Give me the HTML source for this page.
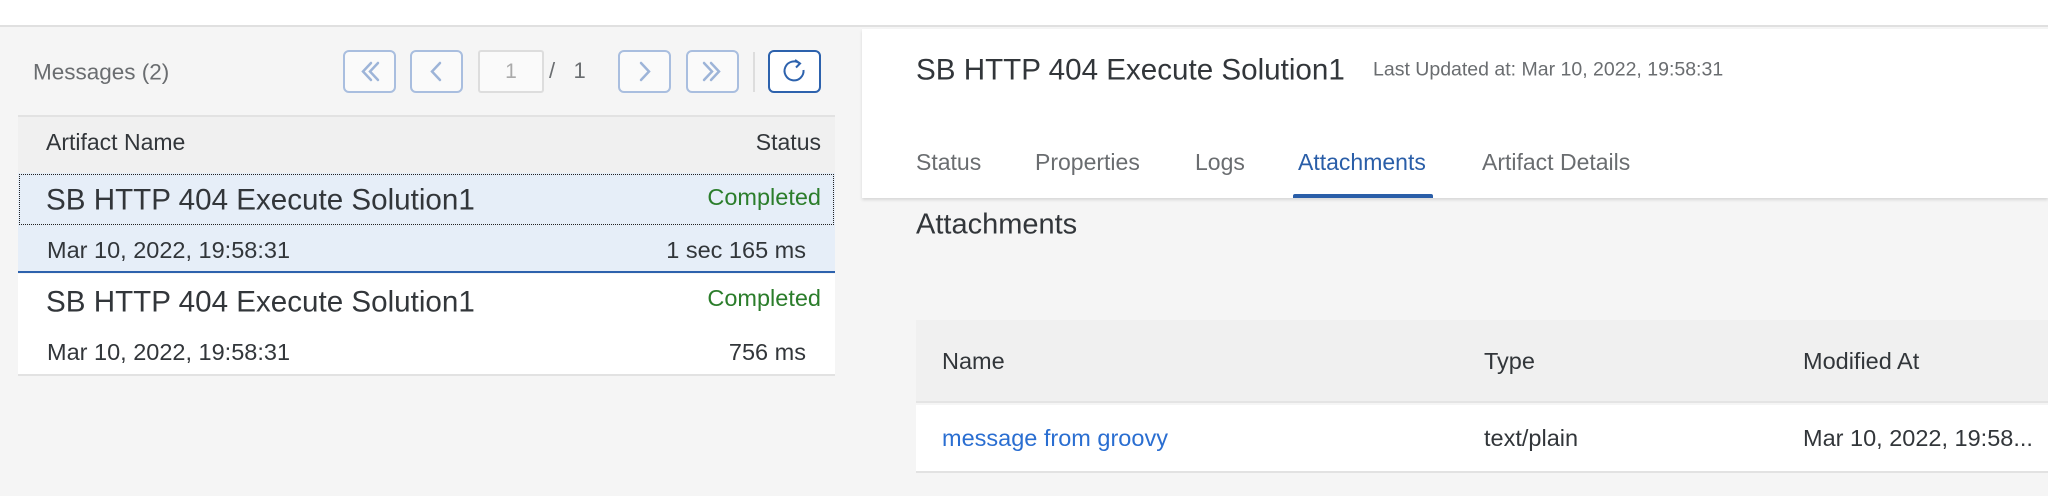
<!DOCTYPE html>
<html><head><meta charset="utf-8"><style>
*{margin:0;padding:0;box-sizing:border-box}
body{width:2048px;height:496px;background:#f5f5f5;font-family:"Liberation Sans",sans-serif;position:relative;overflow:hidden;color:#32363a}
.a{position:absolute;white-space:nowrap}
.t{position:absolute;white-space:nowrap;transform:translateY(-50%);line-height:1.2}
.btn{position:absolute;top:50px;width:53px;height:43px;border:2px solid #a9bedf;border-radius:6px;background:#fafafa}
.btn svg{position:absolute;left:0;top:0}
</style></head><body>
<div class="a" style="left:0;top:0;width:2048px;height:27px;background:#fff;border-bottom:2px solid #e0e0e0"></div>

<div class="t" style="left:33px;top:72px;font-size:22.5px;color:#6a6d70">Messages (2)</div>
<div class="btn" style="left:343px"><svg width="49" height="39"><path d="M26 11l-8 8.5 8 8.5M33 11l-8 8.5 8 8.5" fill="none" stroke="#9db4d8" stroke-width="2.5" stroke-linecap="round"/></svg></div>
<div class="btn" style="left:410px"><svg width="49" height="39"><path d="M28 11l-8 8.5 8 8.5" fill="none" stroke="#9db4d8" stroke-width="2.5" stroke-linecap="round"/></svg></div>
<div class="a" style="left:478px;top:50px;width:66px;height:43px;border:2px solid #ddd;border-radius:3px;background:#fafafa;text-align:center;line-height:39px;font-size:21px;color:#aaa">1</div>
<div class="t" style="left:549px;top:71px;font-size:22px;color:#6a6d70">/&nbsp;&nbsp;&nbsp;1</div>
<div class="btn" style="left:618px"><svg width="49" height="39"><path d="M21 11l8 8.5-8 8.5" fill="none" stroke="#9db4d8" stroke-width="2.5" stroke-linecap="round"/></svg></div>
<div class="btn" style="left:686px"><svg width="49" height="39"><path d="M16 11l8 8.5-8 8.5M23 11l8 8.5-8 8.5" fill="none" stroke="#9db4d8" stroke-width="2.5" stroke-linecap="round"/></svg></div>
<div class="a" style="left:753px;top:52px;width:2px;height:40px;background:#ddd"></div>
<div class="btn" style="left:768px;border-color:#2d62ad;background:#fff"><svg width="49" height="39"><path d="M30 11.5A9.5 9.5 0 1 0 33.5 18" fill="none" stroke="#2d62ad" stroke-width="2"/><path d="M25 8l5 3.5-4 4" fill="none" stroke="#2d62ad" stroke-width="2"/></svg></div>

<div class="a" style="left:18px;top:115px;width:817px;height:58px;background:#f0f0f0;border-top:2px solid #e2e2e2"></div>
<div class="t" style="left:46px;top:143px;font-size:23px">Artifact Name</div>
<div class="t" style="right:1227px;top:143px;font-size:23px">Status</div>

<div class="a" style="left:18px;top:173px;width:817px;height:100px;background:#e6eef8;border-bottom:2px solid #2d62ad"></div>
<div class="a" style="left:19px;top:174px;width:815px;height:51px;border:1px dotted #222"></div>
<div class="t" style="left:46px;top:200px;font-size:29.6px">SB HTTP 404 Execute Solution1</div>
<div class="t" style="right:1227px;top:197px;font-size:23.5px;color:#2b7d2b">Completed</div>
<div class="t" style="left:47px;top:250px;font-size:23.5px">Mar 10, 2022, 19:58:31</div>
<div class="t" style="right:1242px;top:250px;font-size:23.5px">1 sec 165 ms</div>

<div class="a" style="left:18px;top:274px;width:817px;height:102px;background:#fff;border-bottom:2px solid #e2e2e2"></div>
<div class="t" style="left:46px;top:302px;font-size:29.6px">SB HTTP 404 Execute Solution1</div>
<div class="t" style="right:1227px;top:298px;font-size:23.5px;color:#2b7d2b">Completed</div>
<div class="t" style="left:47px;top:352px;font-size:23.5px">Mar 10, 2022, 19:58:31</div>
<div class="t" style="right:1242px;top:352px;font-size:23.5px">756 ms</div>

<div class="a" style="left:862px;top:29px;width:1186px;height:169px;background:#fff;box-shadow:0 2px 3px rgba(0,0,0,.12)"></div>
<div class="t" style="left:916px;top:70px;font-size:29.6px">SB HTTP 404 Execute Solution1</div>
<div class="t" style="left:1373px;top:70px;font-size:19.5px;color:#6a6d70">Last Updated at: Mar 10, 2022, 19:58:31</div>
<div class="t" style="left:916px;top:163px;font-size:23px;color:#6a6d70">Status</div>
<div class="t" style="left:1035px;top:163px;font-size:23px;color:#6a6d70">Properties</div>
<div class="t" style="left:1195px;top:163px;font-size:23px;color:#6a6d70">Logs</div>
<div class="t" style="left:1298px;top:163px;font-size:23px;color:#2a5ea8">Attachments</div>
<div class="t" style="left:1482px;top:163px;font-size:23px;color:#6a6d70">Artifact Details</div>
<div class="a" style="left:1293px;top:194px;width:140px;height:4px;background:#2a5ea8;border-radius:2px 2px 0 0"></div>

<div class="t" style="left:916px;top:225px;font-size:29px">Attachments</div>
<div class="a" style="left:916px;top:320px;width:1132px;height:83px;background:#f0f0f0;border-bottom:2px solid #e4e4e4"></div>
<div class="t" style="left:942px;top:361px;font-size:23.5px">Name</div>
<div class="t" style="left:1484px;top:361px;font-size:23.5px">Type</div>
<div class="t" style="left:1803px;top:361px;font-size:23.5px">Modified At</div>
<div class="a" style="left:916px;top:405px;width:1132px;height:68px;background:#fff;border-bottom:2px solid #e2e2e2"></div>
<div class="t" style="left:942px;top:438px;font-size:23.5px;color:#2a6ed1">message from groovy</div>
<div class="t" style="left:1484px;top:438px;font-size:23.5px">text/plain</div>
<div class="t" style="left:1803px;top:438px;font-size:23.5px">Mar 10, 2022, 19:58...</div>
</body></html>
